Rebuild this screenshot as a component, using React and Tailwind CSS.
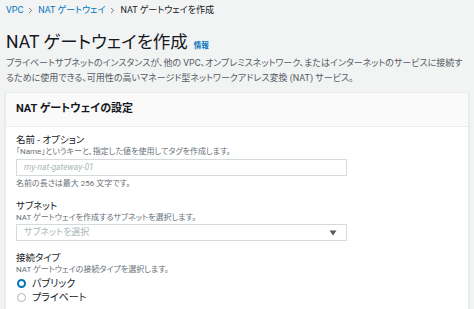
import { ChevronRight } from 'lucide-react';

const Field = ({ label, desc, children }) => (
  <div>
    <div className="text-[9.5px] leading-[13px] text-[#16191f]">{label}</div>
    <div className="text-[8px] leading-[11px] text-[#687078]">{desc}</div>
    {children}
  </div>
);

const Radio = ({ checked, label }) => (
  <div className="flex items-center gap-[6px] h-[14px]">
    <span
      className={`w-[9px] h-[9px] rounded-full ${
        checked ? 'border-[2.5px] border-[#0073bb] bg-white' : 'border border-[#aab7b8] bg-white'
      }`}
    />
    <span className="text-[10px] text-[#16191f]">{label}</span>
  </div>
);

export default function App() {
  return (
    <div className="w-[474px] h-[309px] overflow-hidden bg-[#f2f3f3] font-[Roboto,'Noto_Sans_CJK_JP',sans-serif] [font-feature-settings:'palt'] text-[#16191f]">
      <div className="px-[6px] pt-[4px]">
        <nav className="flex items-center gap-[3px] h-[13px] text-[9px]">
          <span className="text-[#0073bb]">VPC</span>
          <ChevronRight className="w-[9px] h-[9px] text-[#687078]" strokeWidth={2.5} />
          <span className="text-[#0073bb]">NAT ゲートウェイ</span>
          <ChevronRight className="w-[9px] h-[9px] text-[#687078]" strokeWidth={2.5} />
          <span>NAT ゲートウェイを作成</span>
        </nav>

        <div className="flex items-baseline gap-[6px] mt-[14px]">
          <h1 className="text-[17.5px] leading-[22px] font-normal">NAT ゲートウェイを作成</h1>
          <span className="text-[7.5px] font-bold text-[#0073bb]">情報</span>
        </div>

        <p className="mt-[3px] text-[9px] leading-[15px] text-[#545b64] whitespace-nowrap">
          プライベートサブネットのインスタンスが、他の VPC、オンプレミスネットワーク、またはインターネットのサービスに接続す
          <br />
          るために使用できる、可用性の高いマネージド型ネットワークアドレス変換 (NAT) サービス。
        </p>
      </div>

      <div className="mx-[5px] mt-[6px] bg-white border border-[#eaeded] shadow-[0_1px_1px_rgba(0,28,36,0.2)]">
        <div className="h-[34px] flex items-center px-[10px] bg-[#fafafa] border-b border-[#eaeded]">
          <h2 className="text-[11px] font-bold">NAT ゲートウェイの設定</h2>
        </div>

        <div className="px-[10px] pt-[6px] pb-[10px] flex flex-col gap-[10px]">
          <div>
            <Field label="名前 - オプション" desc="「Name」というキーと、指定した値を使用してタグを作成します。">
              <div className="mt-[2px] w-[331px] h-[17px] border border-[#d5dbdb] flex items-center px-[7px]">
                <span className="text-[8.5px] italic text-[#aab7b8]">my-nat-gateway-01</span>
              </div>
            </Field>
            <div className="mt-[2px] text-[8px] leading-[11px] text-[#687078]">名前の長さは最大 256 文字です。</div>
          </div>

          <Field label="サブネット" desc="NAT ゲートウェイを作成するサブネットを選択します。">
            <div className="mt-[1px] w-[331px] h-[17px] border border-[#d5dbdb] flex items-center justify-between pl-[7px] pr-[9px]">
              <span className="text-[9px] text-[#aab7b8]">サブネットを選択</span>
              <svg width="8" height="6" viewBox="0 0 8 6">
                <path d="M0.5 0.5 L7.5 0.5 L4 5.5 Z" fill="#545b64" />
              </svg>
            </div>
          </Field>

          <Field label="接続タイプ" desc="NAT ゲートウェイの接続タイプを選択します。">
            <div className="mt-[1px] pl-[1px]">
              <Radio checked label="パブリック" />
              <Radio label="プライベート" />
            </div>
          </Field>
        </div>
      </div>
    </div>
  );
}
